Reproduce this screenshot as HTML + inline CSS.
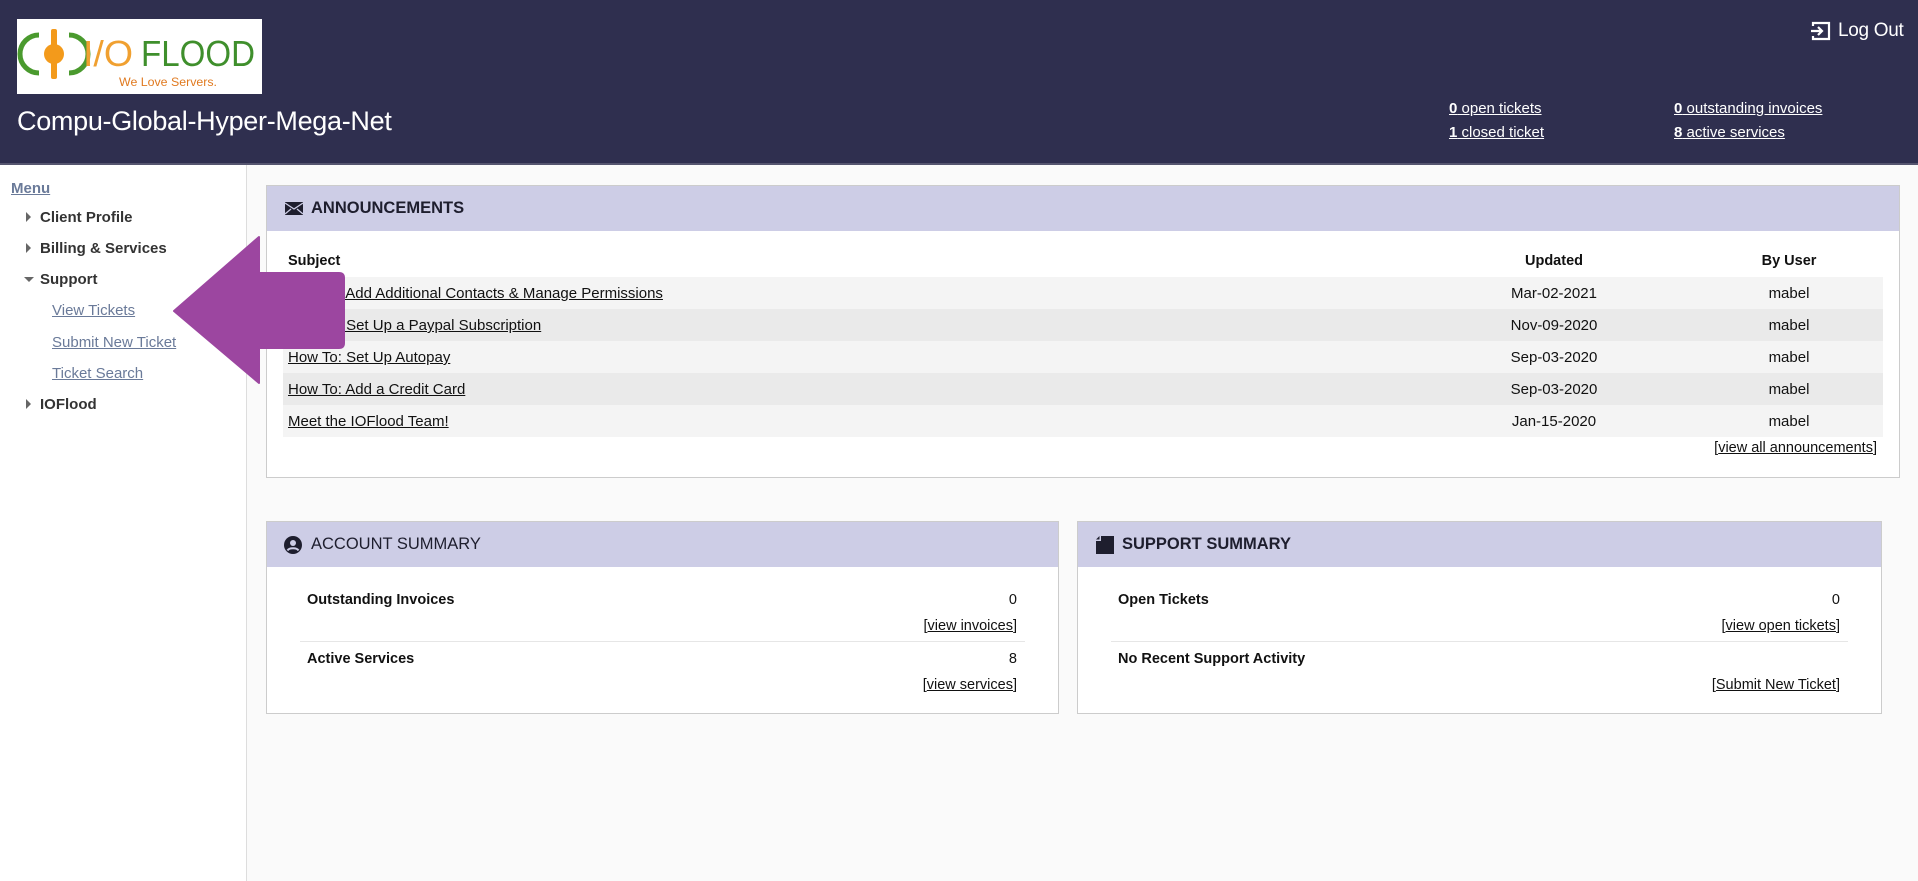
<!DOCTYPE html>
<html><head><meta charset="utf-8"><style>
*{margin:0;padding:0;box-sizing:border-box}
body{width:1918px;height:881px;overflow:hidden;background:#fafafa;font-family:"Liberation Sans",Arial,sans-serif;color:#111;position:relative}
.a{position:absolute;white-space:nowrap}
#hdr{position:absolute;left:0;top:0;width:1918px;height:165px;background:#2f2f4f;border-bottom:2px solid #55556f}
#side{position:absolute;left:0;top:165px;width:247px;height:716px;background:#fff;border-right:1px solid #ddd}
.hl{color:#fff;font-size:15px;text-decoration:underline}
.mi{font-size:15px;font-weight:bold;color:#333}
.sub{font-size:15px;color:#6a7a99;text-decoration:underline}
.tri{position:absolute;width:0;height:0}
.panel{position:absolute;background:#fff;border:1px solid #ccc}
.ph{position:absolute;left:0;top:0;right:0;height:45px;background:#cdcde6;font-size:16.5px;font-weight:bold;color:#1e1e2e}
.row{position:absolute;left:283px;width:1600px;height:32px;font-size:15px;line-height:34px}
.u{text-decoration:underline}
.sm{font-size:14.5px}
</style></head><body>
<div id="hdr">
 <div class="a" style="left:17px;top:19px;width:245px;height:75px;background:#fff">
  <svg width="245" height="75" viewBox="0 0 245 75">
   <path d="M22 16 A18 18 0 0 0 22 54" stroke="#4a9a2e" stroke-width="5" fill="none"/>
   <path d="M52 16 A18 18 0 0 1 52 54" stroke="#4a9a2e" stroke-width="5" fill="none"/>
   <rect x="34" y="10" width="6" height="50" rx="2" fill="#f39a1b"/>
   <circle cx="37" cy="35" r="10" fill="#f39a1b"/>
   <text x="66" y="47" font-family="Liberation Sans,sans-serif" font-size="36" fill="#f0a030" textLength="50" lengthAdjust="spacingAndGlyphs">I/O</text>
   <text x="124" y="47" font-family="Liberation Sans,sans-serif" font-size="36" fill="#3f8f2c" textLength="114" lengthAdjust="spacingAndGlyphs">FLOOD</text>
   <text x="102" y="67" font-family="Liberation Sans,sans-serif" font-size="12" fill="#e07a20" textLength="98" lengthAdjust="spacingAndGlyphs">We Love Servers.</text>
  </svg>
 </div>
 <div class="a" style="left:17px;top:106px;font-size:27px;color:#fff;letter-spacing:-0.3px">Compu-Global-Hyper-Mega-Net</div>
 <svg class="a" style="left:1810px;top:20px" width="22" height="22" viewBox="0 0 22 22"><path d="M3 6V3h16v16H3v-3" stroke="#fff" stroke-width="2.2" fill="none"/><path d="M1 11h11M8 7l4 4-4 4" stroke="#fff" stroke-width="2.2" fill="none"/></svg>
 <div class="a" style="left:1838px;top:20px;font-size:19px;color:#fff;letter-spacing:-0.3px">Log Out</div>
 <div class="a hl" style="left:1449px;top:100px"><b>0</b> open tickets</div>
 <div class="a hl" style="left:1449px;top:124px"><b>1</b> closed ticket</div>
 <div class="a hl" style="left:1674px;top:100px"><b>0</b> outstanding invoices</div>
 <div class="a hl" style="left:1674px;top:124px"><b>8</b> active services</div>
</div>
<div id="side"></div>
<div class="a" style="left:11px;top:180px;font-size:15px;font-weight:bold;color:#6a7a99;text-decoration:underline">Menu</div>
<div class="tri" style="left:26px;top:212px;border-left:5px solid #666;border-top:5px solid transparent;border-bottom:5px solid transparent"></div>
<div class="a mi" style="left:40px;top:209px">Client Profile</div>
<div class="tri" style="left:26px;top:243px;border-left:5px solid #666;border-top:5px solid transparent;border-bottom:5px solid transparent"></div>
<div class="a mi" style="left:40px;top:240px">Billing &amp; Services</div>
<div class="tri" style="left:24px;top:277px;border-top:5px solid #666;border-left:5px solid transparent;border-right:5px solid transparent"></div>
<div class="a mi" style="left:40px;top:271px">Support</div>
<div class="a sub" style="left:52px;top:302px">View Tickets</div>
<div class="a sub" style="left:52px;top:334px">Submit New Ticket</div>
<div class="a sub" style="left:52px;top:365px">Ticket Search</div>
<div class="tri" style="left:26px;top:399px;border-left:5px solid #666;border-top:5px solid transparent;border-bottom:5px solid transparent"></div>
<div class="a mi" style="left:40px;top:396px">IOFlood</div>

<div class="panel" style="left:266px;top:185px;width:1634px;height:293px">
 <div class="ph"><svg class="a" style="left:18px;top:16px" width="18" height="13" viewBox="0 0 18 13"><rect width="18" height="13" fill="#1e1e2e"/><path d="M0 1l9 6 9-6M0 12l6-5M18 12l-6-5" stroke="#cdcde6" stroke-width="1.3" fill="none"/></svg><span class="a" style="left:44px;top:13px">ANNOUNCEMENTS</span></div>
</div>
<div class="a" style="left:288px;top:253px;font-size:14.5px;font-weight:bold">Subject</div>
<div class="a" style="left:1504px;width:100px;text-align:center;top:253px;font-size:14.5px;font-weight:bold">Updated</div>
<div class="a" style="left:1739px;width:100px;text-align:center;top:253px;font-size:14.5px;font-weight:bold">By User</div>
<div class="row" style="top:277px;background:#f4f4f4"><span class="a u" style="left:5px">How To: Add Additional Contacts &amp; Manage Permissions</span><span class="a" style="left:1221px;width:100px;text-align:center">Mar-02-2021</span><span class="a" style="left:1456px;width:100px;text-align:center">mabel</span></div>
<div class="row" style="top:309px;background:#eaeaea"><span class="a u" style="left:5px">How To: Set Up a Paypal Subscription</span><span class="a" style="left:1221px;width:100px;text-align:center">Nov-09-2020</span><span class="a" style="left:1456px;width:100px;text-align:center">mabel</span></div>
<div class="row" style="top:341px;background:#f4f4f4"><span class="a u" style="left:5px">How To: Set Up Autopay</span><span class="a" style="left:1221px;width:100px;text-align:center">Sep-03-2020</span><span class="a" style="left:1456px;width:100px;text-align:center">mabel</span></div>
<div class="row" style="top:373px;background:#eaeaea"><span class="a u" style="left:5px">How To: Add a Credit Card</span><span class="a" style="left:1221px;width:100px;text-align:center">Sep-03-2020</span><span class="a" style="left:1456px;width:100px;text-align:center">mabel</span></div>
<div class="row" style="top:405px;background:#f4f4f4"><span class="a u" style="left:5px">Meet the IOFlood Team!</span><span class="a" style="left:1221px;width:100px;text-align:center">Jan-15-2020</span><span class="a" style="left:1456px;width:100px;text-align:center">mabel</span></div>
<div class="a sm" style="right:41px;top:440px">[<span class="u">view all announcements</span>]</div>

<div class="panel" style="left:266px;top:521px;width:793px;height:193px">
 <div class="ph"><svg class="a" style="left:17px;top:14px" width="18" height="18" viewBox="0 0 18 18"><circle cx="9" cy="9" r="9" fill="#1e1e2e"/><circle cx="9" cy="7" r="3" fill="#cdcde6"/><path d="M3.5 14.5c1.5-3 9.5-3 11 0" stroke="#cdcde6" stroke-width="2" fill="none"/></svg><span class="a" style="left:44px;top:13px;font-weight:normal">ACCOUNT SUMMARY</span></div>
 <div class="a sm" style="left:40px;top:70px;font-weight:bold">Outstanding Invoices</div>
 <div class="a sm" style="right:41px;top:70px">0</div>
 <div class="a sm" style="right:41px;top:96px">[<span class="u">view invoices</span>]</div>
 <div class="a" style="left:33px;right:33px;top:119px;border-top:1px solid #e6e6e6"></div>
 <div class="a sm" style="left:40px;top:129px;font-weight:bold">Active Services</div>
 <div class="a sm" style="right:41px;top:129px">8</div>
 <div class="a sm" style="right:41px;top:155px">[<span class="u">view services</span>]</div>
</div>
<div class="panel" style="left:1077px;top:521px;width:805px;height:193px">
 <div class="ph"><svg class="a" style="left:18px;top:14px" width="18" height="18" viewBox="0 0 18 18"><path d="M5 0h13v18H0V5h5z" fill="#1e1e2e"/><path d="M0 3.5h3.5V0" fill="#1e1e2e"/></svg><span class="a" style="left:44px;top:13px">SUPPORT SUMMARY</span></div>
 <div class="a sm" style="left:40px;top:70px;font-weight:bold">Open Tickets</div>
 <div class="a sm" style="right:41px;top:70px">0</div>
 <div class="a sm" style="right:41px;top:96px">[<span class="u">view open tickets</span>]</div>
 <div class="a" style="left:33px;right:33px;top:119px;border-top:1px solid #e6e6e6"></div>
 <div class="a sm" style="left:40px;top:129px;font-weight:bold">No Recent Support Activity</div>
 <div class="a sm" style="right:41px;top:155px">[<span class="u">Submit New Ticket</span>]</div>
</div>

<svg class="a" style="left:0;top:0" width="400" height="400"><path d="M174 311 L259 237 L259 273 L339 273 Q344 273 344 278 L344 343 Q344 348 339 348 L259 348 L259 383 Z" fill="#9c46a0" stroke="#9c46a0" stroke-width="2" stroke-linejoin="round"/></svg>
</body></html>
